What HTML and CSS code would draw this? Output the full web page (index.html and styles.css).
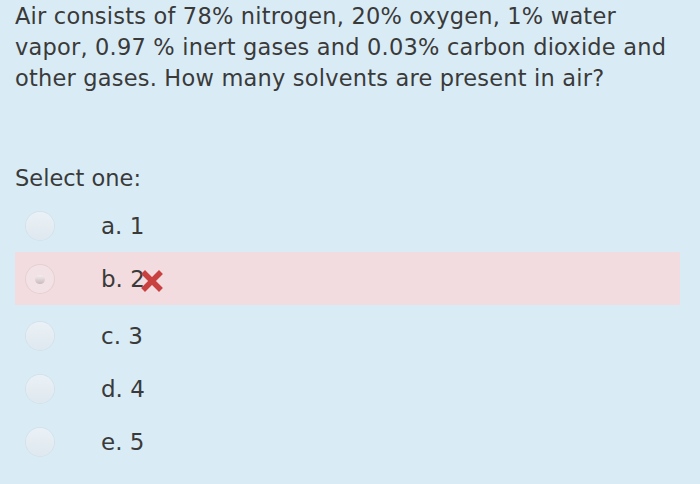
FILE: index.html
```
<!DOCTYPE html>
<html lang="en">
<head>
    <meta charset="UTF-8">
    <title>Question</title>
    <link rel="stylesheet" href="styles.css">
</head>
<body>
    <div class="question">
        <p class="qtext">Air consists of 78% nitrogen, 20% oxygen, 1% water vapor, 0.97 % inert gases and 0.03% carbon dioxide and other gases. How many solvents are present in air?</p>

        <div class="answer-block">
            <div class="prompt">Select one:</div>
            <div class="options">
                <label class="option">
                    <span class="radio"></span>
                    <span class="label-text">a. 1</span>
                </label>
                <label class="option incorrect">
                    <span class="radio checked"></span>
                    <span class="label-text">b. 2<svg class="cross" width="22" height="22" viewBox="0 0 22 22"><path d="M4 4 L18 18 M18 4 L4 18" stroke="#c8403f" stroke-width="5.5" stroke-linecap="square"/></svg></span>
                </label>
                <label class="option">
                    <span class="radio"></span>
                    <span class="label-text">c. 3</span>
                </label>
                <label class="option">
                    <span class="radio"></span>
                    <span class="label-text">d. 4</span>
                </label>
                <label class="option">
                    <span class="radio"></span>
                    <span class="label-text">e. 5</span>
                </label>
            </div>
        </div>
    </div>
</body>
</html>
```

FILE: styles.css
```
* {
    margin: 0;
    padding: 0;
    box-sizing: border-box;
}

body {
    font-family: 'DejaVu Sans', 'Open Sans', sans-serif;
    background: #d9ecf6;
    color: #3a3a3a;
    width: 700px;
    height: 484px;
    overflow: hidden;
}

.question {
    padding: 1px 15px 0 15px;
}

.qtext {
    max-width: 658px;
    font-size: 22.5px;
    line-height: 31px;
    letter-spacing: 0.2px;
}

.answer-block {
    margin-top: 70px;
}

.prompt {
    font-size: 22.5px;
    line-height: 28px;
    margin-bottom: 7px;
}

.options {
    display: flex;
    flex-direction: column;
}

.option {
    display: flex;
    align-items: center;
    height: 53px;
    padding-left: 11px;
}

.option.incorrect {
    background: #f2dcdf;
    width: 665px;
    margin-bottom: 4px;
}

.radio {
    width: 28px;
    height: 28px;
    border-radius: 50%;
    background: linear-gradient(180deg, #eaf1f6 0%, #dfe8ef 100%);
    box-shadow: 0 0 0 1px #d3e1ea;
    position: relative;
}

.radio.checked {
    background: #f3e2e5;
    box-shadow: 0 0 0 1px #e6cfd3;
}

.radio.checked::after {
    content: "";
    position: absolute;
    left: 9px;
    top: 10px;
    width: 10px;
    height: 9px;
    border-radius: 50%;
    background: linear-gradient(180deg, #f6eef0 0%, #c9b9bd 100%);
}

.label-text {
    margin-left: 47px;
    font-size: 23px;
    display: flex;
    align-items: center;
}

.cross {
    margin-left: -4px;
    margin-top: 5px;
}
```
